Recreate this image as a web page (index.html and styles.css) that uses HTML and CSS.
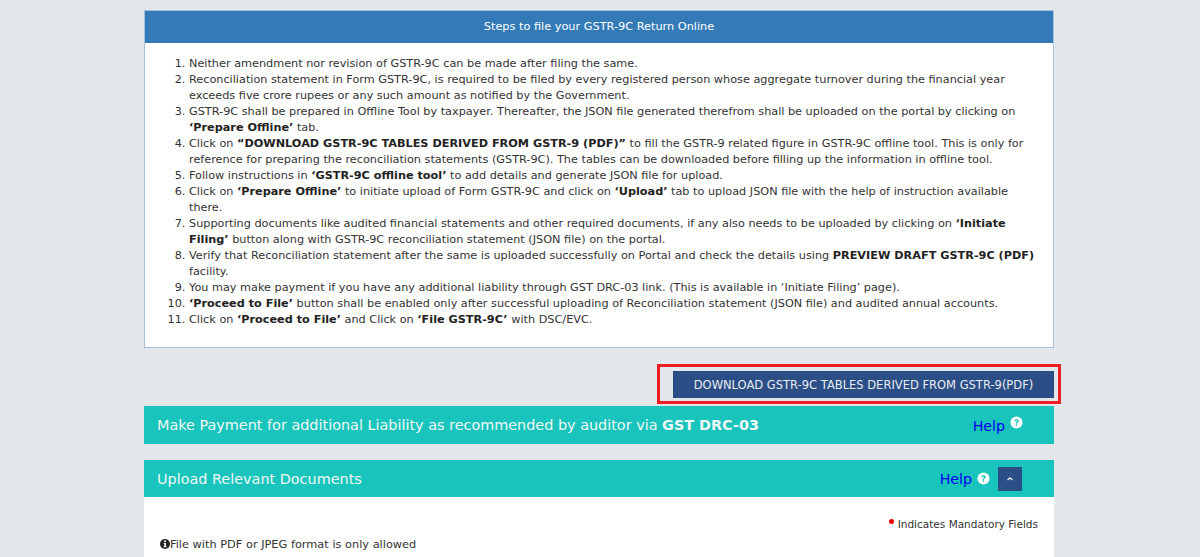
FILE: index.html
```html
<!DOCTYPE html>
<html>
<head>
    <meta charset="utf-8">
    <link rel="stylesheet" href="styles.css">
</head>
<body>
    <div class="page">
      <div class="steps">
        <div class="steps-title">Steps to file your GSTR-9C Return Online</div>
        <ol class="steps-list">
          <li>Neither amendment nor revision of GSTR-9C can be made after filing the same.</li>
          <li>Reconciliation statement in Form GSTR-9C, is required to be filed by every registered person whose aggregate turnover during the financial year exceeds five crore rupees or any such amount as notified by the Government.</li>
          <li>GSTR-9C shall be prepared in Offline Tool by taxpayer. Thereafter, the JSON file generated therefrom shall be uploaded on the portal by clicking on <b>‘Prepare Offline’</b> tab.</li>
          <li>Click on <b>“DOWNLOAD GSTR-9C TABLES DERIVED FROM GSTR-9 (PDF)”</b> to fill the GSTR-9 related figure in GSTR-9C offline tool. This is only for reference for preparing the reconciliation statements (GSTR-9C). The tables can be downloaded before filling up the information in offline tool.</li>
          <li>Follow instructions in <b>‘GSTR-9C offline tool’</b> to add details and generate JSON file for upload.</li>
          <li>Click on <b>‘Prepare Offline’</b> to initiate upload of Form GSTR-9C and click on <b>‘Upload’</b> tab to upload JSON file with the help of instruction available there.</li>
          <li>Supporting documents like audited financial statements and other required documents, if any also needs to be uploaded by clicking on <b>‘Initiate Filing’</b> button along with GSTR-9C reconciliation statement (JSON file) on the portal.</li>
          <li>Verify that Reconciliation statement after the same is uploaded successfully on Portal and check the details using <b>PREVIEW DRAFT GSTR-9C (PDF)</b> facility.</li>
          <li>You may make payment if you have any additional liability through GST DRC-03 link. (This is available in ‘Initiate Filing’ page).</li>
          <li><b>‘Proceed to File’</b> button shall be enabled only after successful uploading of Reconciliation statement (JSON file) and audited annual accounts.</li>
          <li>Click on <b>‘Proceed to File’</b> and Click on <b>‘File GSTR-9C’</b> with DSC/EVC.</li>
        </ol>
      </div>

      <div class="download-row">
        <button class="download-btn">DOWNLOAD GSTR-9C TABLES DERIVED FROM GSTR-9(PDF)</button>
        <div class="highlight"></div>
      </div>

      <div class="bar bar-payment">
        <div class="bar-title">Make Payment for additional Liability as recommended by auditor via <b>GST DRC-03</b></div>
        <a class="help help-payment">Help</a>
        <svg class="help-icon" viewBox="0 0 14 14"><circle cx="7" cy="7" r="6.5" fill="#fff"/><path d="M4.7 5.4c.2-1.2 1.1-1.9 2.4-1.9 1.3 0 2.3.8 2.3 1.9 0 1.6-1.9 1.6-1.9 2.9H6.2c0-2 1.5-1.9 1.5-2.8 0-.4-.3-.7-.7-.7-.5 0-.7.3-.8.8zM6.2 9h1.4v1.5H6.2z" fill="#18c4bb"/></svg>
      </div>

      <div class="bar bar-upload">
        <div class="bar-title">Upload Relevant Documents</div>
        <a class="help">Help</a>
        <svg class="help-icon" viewBox="0 0 14 14"><circle cx="7" cy="7" r="6.5" fill="#fff"/><path d="M4.7 5.4c.2-1.2 1.1-1.9 2.4-1.9 1.3 0 2.3.8 2.3 1.9 0 1.6-1.9 1.6-1.9 2.9H6.2c0-2 1.5-1.9 1.5-2.8 0-.4-.3-.7-.7-.7-.5 0-.7.3-.8.8zM6.2 9h1.4v1.5H6.2z" fill="#18c4bb"/></svg>
        <button class="collapse-btn"><svg viewBox="0 0 8 6" width="8" height="6"><path d="M1.5 4 4 1.8 6.5 4" fill="none" stroke="#fff" stroke-width="1.1"/></svg></button>
      </div>

      <div class="upload-body">
        <div class="mandatory"><span class="dot"></span>Indicates Mandatory Fields</div>
        <div class="file-note">
          <svg class="info-icon" viewBox="0 0 10 10"><circle cx="5" cy="5" r="5" fill="#222"/><path d="M4 1.6h2v1.5H4zM3.6 4h2.4v3.2h.6v1.1H3.6V7.2h.7V5.1h-.7z" fill="#fff"/></svg>File with PDF or JPEG format is only allowed
        </div>
      </div>
    </div>
</body>
</html>
```

FILE: styles.css
```css
* {
margin: 0;
padding: 0;
box-sizing: border-box;
font-family: "DejaVu Sans", Verdana, sans-serif;
}

body {
background-color: #e3e7eb;
height: 557px;
overflow: hidden;
}

.page {
width: 910px;
margin-left: 144px;
padding-top: 10px;
}

.steps {
background-color: #fff;
border: 1px solid #a3c0dc;
height: 338px;
}

.steps-title {
background-color: #337ab7;
color: #fff;
font-size: 11.3px;
height: 32px;
line-height: 32px;
text-align: center;
}

.steps-list {
padding: 13px 14px 0 44px;
font-size: 11.25px;
line-height: 16px;
color: #333;
}

.steps-list b {
color: #222;
}

.download-row {
position: relative;
display: flex;
justify-content: flex-end;
margin-top: 23px;
}

.download-btn {
width: 381px;
height: 27px;
background-color: #2c4e86;
border: 1px solid #2a4a80;
color: #e8ecf2;
font-size: 11.5px;
}

.highlight {
position: absolute;
top: -7px;
right: -7px;
width: 404px;
height: 40px;
border: 3px solid #ee1c25;
}

.bar {
display: flex;
align-items: center;
background-color: #18c4bb;
color: #eef;
}

.bar-payment {
height: 38px;
margin-top: 8px;
}

.bar-upload {
height: 37px;
margin-top: 16px;
}

.bar-title {
flex: 1;
padding-left: 13px;
font-size: 14.4px;
color: #f0f8f7;
}

.help {
color: #0000ee;
font-size: 14.2px;
}

.help-icon {
width: 13px;
height: 13px;
margin: 0 32px 0 5px;
}

.help-payment {
margin-bottom: -1px;
}

.bar-payment .help-icon {
margin: -5px 31px 0 5px;
}

.bar-upload .help-icon {
margin-right: 8px;
}

.collapse-btn {
display: flex;
align-items: center;
justify-content: center;
width: 24px;
height: 24px;
margin-right: 32px;
background-color: #2c4e86;
border: none;
}

.upload-body {
background-color: #fff;
height: 60px;
padding: 21px 16px 0 16px;
font-size: 11.35px;
color: #333;
}

.mandatory {
text-align: right;
font-size: 10.5px;
}

.dot {
display: inline-block;
width: 5px;
height: 5px;
margin: 0 4px 4px 0;
background-color: #e00;
border-radius: 50%;
}

.file-note {
margin-top: 7px;
}

.info-icon {
width: 10px;
height: 10px;
vertical-align: -1px;
}
```
